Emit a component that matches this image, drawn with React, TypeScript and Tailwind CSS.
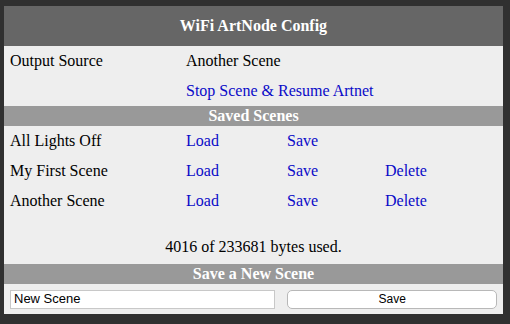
import React from "react";

const serif = { fontFamily: '"Liberation Serif", "Times New Roman", serif' };

function Bar({ children }: { children: React.ReactNode }) {
  return (
    <div className="h-[20px] bg-[#999999] text-white font-bold text-[16px] leading-[20px] text-center">
      {children}
    </div>
  );
}

const link = "text-[#0a0ac8]";

export default function App() {
  const scenes: { name: string; del: boolean }[] = [
    { name: "All Lights Off", del: false },
    { name: "My First Scene", del: true },
    { name: "Another Scene", del: true },
  ];
  return (
    <div className="w-[510px] h-[324px] bg-[#303030] pt-[6px] pl-[4px]" style={serif}>
      <div className="w-[499px] h-[308px] bg-[#eeeeee] text-[16px] text-black">
        <div className="h-[40px] bg-[#666666] text-white font-bold text-[16px] flex items-center justify-center">
          WiFi ArtNode Config
        </div>
        <div className="grid grid-cols-[176px_1fr] pl-[6px]">
          <div className="h-[30px] flex items-center">Output Source</div>
          <div className="h-[30px] flex items-center">Another Scene</div>
          <div className="h-[30px]" />
          <div className={`h-[30px] flex items-center ${link}`}>Stop Scene &amp; Resume Artnet</div>
        </div>
        <Bar>Saved Scenes</Bar>
        <div className="grid grid-cols-[176px_101px_98px_1fr] pl-[6px]">
          {scenes.map((s) => (
            <React.Fragment key={s.name}>
              <div className="h-[30px] flex items-center">{s.name}</div>
              <div className={`h-[30px] flex items-center ${link}`}>Load</div>
              <div className={`h-[30px] flex items-center ${link}`}>Save</div>
              <div className={`h-[30px] flex items-center ${link}`}>{s.del ? "Delete" : ""}</div>
            </React.Fragment>
          ))}
        </div>
        <div className="h-[48px] pt-[22px] text-center leading-[18px]">4016 of 233681 bytes used.</div>
        <Bar>Save a New Scene</Bar>
        <div
          className="h-[30px] flex items-center px-[6px] gap-[12px]"
          style={{ fontFamily: '"Liberation Sans", Arial, sans-serif' }}
        >
          <input
            className="w-[266px] h-[19px] bg-white border border-[#c8c8c8] text-[13px] px-[3px] text-black outline-none"
            defaultValue="New Scene"
          />
          <button className="w-[210px] h-[19px] bg-white border border-[#b8b8b8] rounded-[5px] text-[12px] text-black leading-[17px]">
            Save
          </button>
        </div>
      </div>
    </div>
  );
}
